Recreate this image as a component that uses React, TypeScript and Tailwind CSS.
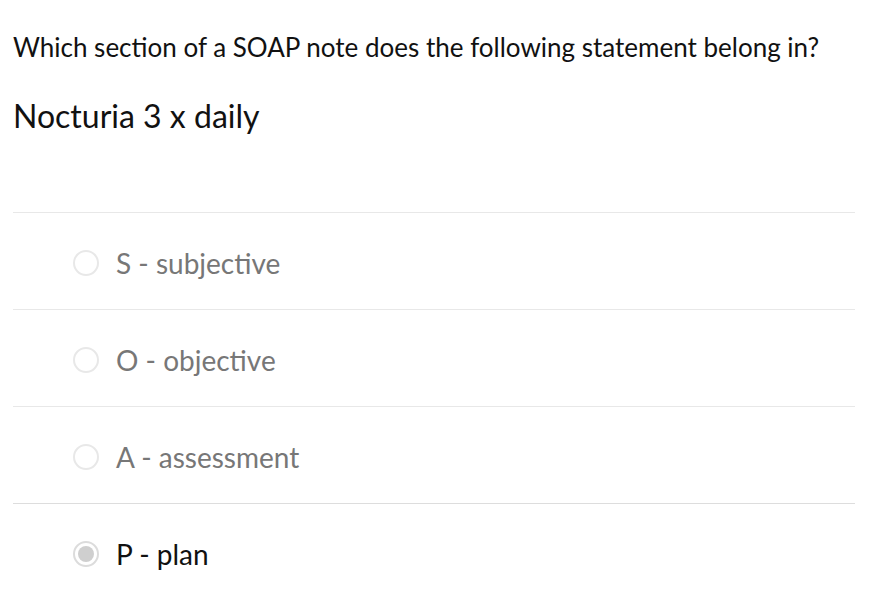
const options = [
  { label: 'S - subjective', selected: false },
  { label: 'O - objective', selected: false },
  { label: 'A - assessment', selected: false },
  { label: 'P - plan', selected: true },
]

function Radio({ selected }: { selected: boolean }) {
  if (selected) {
    return (
      <span className="flex h-[26px] w-[26px] items-center justify-center rounded-full border-[2px] border-[#dcdcdc] bg-white">
        <span className="h-[16px] w-[16px] rounded-full bg-[#cfcfcf]" />
      </span>
    )
  }
  return <span className="h-[26px] w-[26px] rounded-full border-[2px] border-[#e8e8e8] bg-white" />
}

export default function App() {
  return (
    <div className="min-h-screen bg-white px-[13px] pt-[30px] font-['Lato',sans-serif] text-[#111]">
      <p className="text-[26px] leading-[34px]">
        Which section of a SOAP note does the following statement belong in?
      </p>
      <p className="mt-[32px] text-[32px] leading-[40px]">Nocturia 3 x daily</p>

      <div className="mt-[76px] w-[842px]">
        {options.map((opt, i) => (
          <div
            key={opt.label}
            className={i === 3 ? 'border-t border-[#dddddd]' : 'border-t border-[#e8e8e8]'}
          >
            <div className="flex h-[96px] items-center gap-[17px] pl-[60px] pt-[3px]">
              <Radio selected={opt.selected} />
              <span
                className={
                  opt.selected
                    ? 'text-[28px] leading-none text-[#111]'
                    : 'text-[28px] leading-none text-[#777]'
                }
              >
                {opt.label}
              </span>
            </div>
          </div>
        ))}
      </div>
    </div>
  )
}
